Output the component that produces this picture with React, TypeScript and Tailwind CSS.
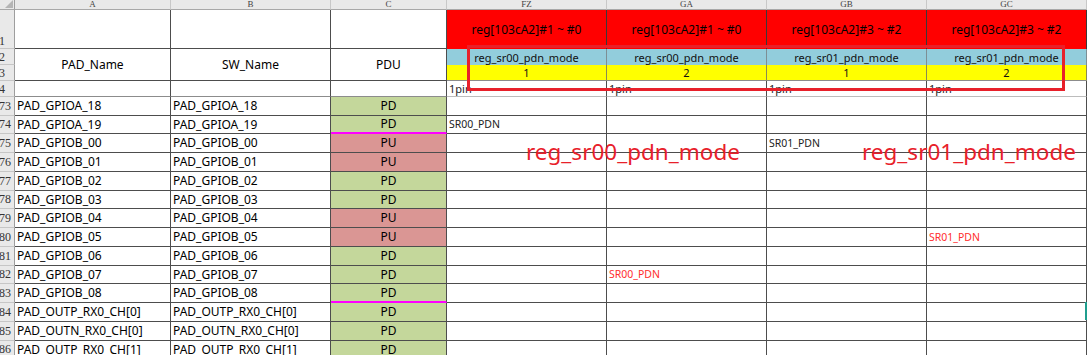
import React from "react";

type DataRow = {
  num: string;
  name: string;
  pdu: "PD" | "PU";
  h: string;
  mark?: boolean;
  fz?: string;
  ga?: string;
  gb?: string;
  gc?: string;
  redGa?: boolean;
  redGc?: boolean;
};

const rows: DataRow[] = [
  { num: "73", name: "PAD_GPIOA_18", pdu: "PD", h: "h-[19px]" },
  { num: "74", name: "PAD_GPIOA_19", pdu: "PD", h: "h-[18px]", mark: true, fz: "SR00_PDN" },
  { num: "75", name: "PAD_GPIOB_00", pdu: "PU", h: "h-[19px]", gb: "SR01_PDN" },
  { num: "76", name: "PAD_GPIOB_01", pdu: "PU", h: "h-[19px]" },
  { num: "77", name: "PAD_GPIOB_02", pdu: "PD", h: "h-[19px]" },
  { num: "78", name: "PAD_GPIOB_03", pdu: "PD", h: "h-[18px]" },
  { num: "79", name: "PAD_GPIOB_04", pdu: "PU", h: "h-[19px]" },
  { num: "80", name: "PAD_GPIOB_05", pdu: "PU", h: "h-[19px]", gc: "SR01_PDN", redGc: true },
  { num: "81", name: "PAD_GPIOB_06", pdu: "PD", h: "h-[19px]" },
  { num: "82", name: "PAD_GPIOB_07", pdu: "PD", h: "h-[18px]", ga: "SR00_PDN", redGa: true },
  { num: "83", name: "PAD_GPIOB_08", pdu: "PD", h: "h-[19px]", mark: true },
  { num: "84", name: "PAD_OUTP_RX0_CH[0]", pdu: "PD", h: "h-[19px]" },
  { num: "85", name: "PAD_OUTN_RX0_CH[0]", pdu: "PD", h: "h-[19px]" },
  { num: "86", name: "PAD_OUTP_RX0_CH[1]", pdu: "PD", h: "h-[18px]" },
];

const regs = [
  { top: "reg[103cA2]#1 ~ #0", mode: "reg_sr00_pdn_mode", val: "1" },
  { top: "reg[103cA2]#1 ~ #0", mode: "reg_sr00_pdn_mode", val: "2" },
  { top: "reg[103cA2]#3 ~ #2", mode: "reg_sr01_pdn_mode", val: "1" },
  { top: "reg[103cA2]#3 ~ #2", mode: "reg_sr01_pdn_mode", val: "2" },
];

const font = { fontFamily: '"Noto Sans", "Liberation Sans", sans-serif' };
const serif = { fontFamily: '"Liberation Serif", "DejaVu Serif", serif' };

function RowNum({ n, h, align = "items-end" }: { n: string; h: string; align?: string }) {
  return (
    <div
      className={`w-[15px] ${h} flex ${align} shrink-0 overflow-hidden bg-[#e9e9e9] border-r border-b border-r-[#9e9e9e] border-b-[#c6c6c6] text-[12px] leading-none text-[#333]`}
      style={serif}
    >
      <span className="-ml-px pb-px">{n}</span>
    </div>
  );
}

function ColHead({ w, label }: { w: string; label: string }) {
  return (
    <div
      className={`${w} h-[10px] shrink-0 flex justify-center items-end bg-[#e9e9e9] border-r border-b border-r-[#c8c8c8] border-b-[#a8a8a8] text-[9px] leading-none text-[#444]`}
      style={serif}
    >
      <span>{label}</span>
    </div>
  );
}

function Sub({ text, red }: { text?: string; red?: boolean }) {
  return (
    <div className="w-[160px] h-full shrink-0 flex items-center pl-[2px] border-r border-b border-[#4d4d4d]">
      {text && (
        <span className={`text-[10.5px] leading-none ${red ? "text-[#ff2d2d]" : "text-[#222]"}`}>{text}</span>
      )}
    </div>
  );
}

export default function App() {
  return (
    <div className="relative w-[1087px] h-[355px] overflow-hidden bg-white text-black" style={font}>
      {/* column headers */}
      <div className="flex">
        <div className="w-[15px] h-[10px] shrink-0 bg-[#e9e9e9] border-r border-b border-r-[#9e9e9e] border-b-[#a8a8a8] flex items-end justify-end">
          <svg width="8" height="8" viewBox="0 0 8 8" className="mr-px mb-px">
            <polygon points="8,0 8,8 0,8" fill="#b5b5b5" />
          </svg>
        </div>
        <ColHead w="w-[156px]" label="A" />
        <ColHead w="w-[160px]" label="B" />
        <ColHead w="w-[116px]" label="C" />
        <ColHead w="w-[160px]" label="FZ" />
        <ColHead w="w-[160px]" label="GA" />
        <ColHead w="w-[160px]" label="GB" />
        <ColHead w="w-[160px]" label="GC" />
      </div>

      {/* header block rows 1-4 */}
      <div className="flex">
        <div className="flex flex-col">
          <RowNum n="1" h="h-[39px]" />
          <RowNum n="2" h="h-[16px]" />
          <RowNum n="3" h="h-[16px]" />
          <RowNum n="4" h="h-[16px]" />
        </div>
        {[
          { w: "w-[156px]", label: "PAD_Name" },
          { w: "w-[160px]", label: "SW_Name" },
          { w: "w-[116px]", label: "PDU" },
        ].map((c) => (
          <div key={c.label} className={`${c.w} shrink-0 flex flex-col`}>
            <div className="h-[39px] border-r border-b border-[#4d4d4d]" />
            <div className="h-[32px] flex items-center justify-center border-r border-b border-[#4d4d4d] text-[12px] leading-none">
              {c.label}
            </div>
            <div className="h-[16px] border-r border-b border-r-[#4d4d4d] border-b-[#8c8c8c]" />
          </div>
        ))}
        {regs.map((r, i) => (
          <div key={i} className="w-[160px] shrink-0 flex flex-col">
            <div className="h-[39px] flex items-center justify-center bg-[#ff0000] border-r border-[#3a3a3a] text-[12px] leading-none">
              {r.top}
            </div>
            <div className="h-[16px] flex items-center justify-center bg-[#92cddc] border-r border-[#7d8f95] text-[11px] leading-none text-[#111]">
              {r.mode}
            </div>
            <div className="h-[16px] flex items-center justify-center bg-[#ffff00] border-r border-b border-r-[#8a8a55] border-b-[#8c8c8c] text-[11px] leading-none text-[#111]">
              {r.val}
            </div>
            <div className="h-[16px] flex items-center pl-[2px] border-r border-b border-r-[#4d4d4d] border-b-[#bcbcbc] text-[11px] leading-none text-[#222]">
              1pin
            </div>
          </div>
        ))}
      </div>

      {/* data rows */}
      {rows.map((r) => (
        <div key={r.num} className={`flex ${r.h}`}>
          <RowNum n={r.num} h="h-full" align="items-center" />
          <div className="w-[156px] h-full shrink-0 flex items-center pl-[2px] border-r border-b border-[#4d4d4d] text-[12px] leading-none">
            {r.name}
          </div>
          <div className="w-[160px] h-full shrink-0 flex items-center pl-[2px] border-r border-b border-[#4d4d4d] text-[12px] leading-none">
            {r.name}
          </div>
          <div
            className={`w-[116px] h-full shrink-0 flex items-center justify-center border-r border-r-[#4d4d4d] text-[12px] leading-none ${
              r.pdu === "PD" ? "bg-[#c4d79b]" : "bg-[#da9694]"
            } ${r.mark ? "border-b-2 border-b-[#ff00ff]" : "border-b border-b-[#4d4d4d]"}`}
          >
            {r.pdu}
          </div>
          <Sub text={r.fz} />
          <Sub text={r.ga} red={r.redGa} />
          <Sub text={r.gb} />
          <Sub text={r.gc} red={r.redGc} />
        </div>
      ))}

      {/* annotations drawn over the sheet */}
      <div className="absolute left-[467px] top-[45px] w-[598px] h-[46px] border-[3px] border-[#e8202a]" />
      <div className="absolute left-[526px] top-[141px] text-[22.5px] leading-none text-[#e8202a]">reg_sr00_pdn_mode</div>
      <div className="absolute left-[862px] top-[141px] text-[22.5px] leading-none text-[#e8202a]">reg_sr01_pdn_mode</div>
      <div className="absolute left-[1085px] top-[302px] w-[2px] h-[18px] bg-[#1f9e8e]" />
    </div>
  );
}
